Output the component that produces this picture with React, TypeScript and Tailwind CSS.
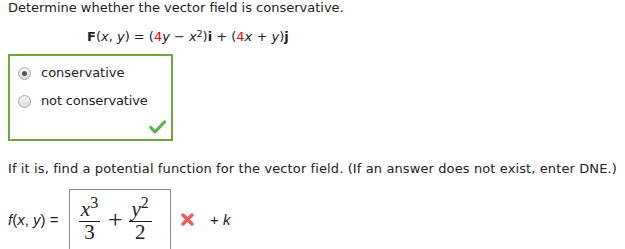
import React from "react";

function Radio({ checked }: { checked?: boolean }) {
  return (
    <span className="relative inline-flex h-[13px] w-[13px] items-center justify-center rounded-full border border-[#a8a8a8] bg-gradient-to-b from-[#f4f4f4] to-[#dcdcdc]">
      {checked && <span className="h-[5px] w-[5px] rounded-full bg-[#555]" />}
    </span>
  );
}

function Frac({ num, den, w }: { num: React.ReactNode; den: React.ReactNode; w: string }) {
  return (
    <span className={`inline-flex flex-col items-center ${w}`}>
      <span className="h-[24px] leading-[24px] whitespace-nowrap">{num}</span>
      <span className="h-px w-full bg-[#222]" />
      <span className="h-[20px] leading-[20px]">{den}</span>
    </span>
  );
}

export default function App() {
  return (
    <div className="h-[249px] w-[625px] bg-white pl-[8px] text-[13px] text-[#222] font-['DejaVu_Sans',Verdana,sans-serif]">
      <div className="leading-[16px]">Determine whether the vector field is conservative.</div>
      <div className="mt-[13px] pl-[79px] leading-[16px]">
        <b>F</b>(<i>x</i>, <i>y</i>) = (<span className="text-[#ff0000]">4</span><i>y</i> − <i>x</i>
        <sup className="text-[9px]">2</sup>)<b>i</b> + (<span className="text-[#ff0000]">4</span><i>x</i> + <i>y</i>)<b>j</b>
      </div>
      <div className="mt-[9px] flex h-[87px] w-[165px] flex-col border-2 border-[#6aaa3a] pl-[8px] pt-[9px]">
        <div className="flex items-center gap-[10px] leading-[16px]">
          <Radio checked />
          <span>conservative</span>
        </div>
        <div className="mt-[12px] flex items-center gap-[10px] leading-[16px]">
          <Radio />
          <span className="tracking-[-0.15px]">not conservative</span>
        </div>
        <div className="mt-auto flex justify-end pb-[5px] pr-[5px]">
          <svg width="17" height="14" viewBox="0 0 17 14">
            <path d="M1.8 7.5 L6 11.8 L15.5 2" fill="none" stroke="#5fb04e" strokeWidth="3.2" strokeLinecap="round" strokeLinejoin="round" />
          </svg>
        </div>
      </div>
      <div className="mt-[20px] leading-[16px] tracking-[0.11px]">
        If it is, find a potential function for the vector field. (If an answer does not exist, enter DNE.)
      </div>
      <div className="mt-[12px] flex items-center">
        <span className="w-[61px] text-[15px] leading-[18px] font-['Liberation_Sans',Arial,sans-serif]">
          <i>f</i>(<i>x</i>, <i>y</i>) =
        </span>
        <div className="flex h-[61px] w-[102px] items-start border border-[#8a8a8a] pl-[9px] pt-[7px] text-[21px] text-[#222] font-['Liberation_Serif','Times_New_Roman',serif]">
          <Frac w="w-[21px]" num={<><i>x</i><span className="relative top-[-8px] text-[16px]">3</span></>} den="3" />
          <span className="ml-[8px] mr-[6px] mt-[10px] text-[26px] leading-[26px]">+</span>
          <Frac w="w-[23px]" num={<><i>y</i><span className="relative top-[-8px] text-[16px]">2</span></>} den="2" />
        </div>
        <svg className="ml-[10px]" width="13" height="13" viewBox="0 0 13 13">
          <path d="M2 2 L11 11 M11 2 L2 11" stroke="#f05a5a" strokeWidth="3.4" strokeLinecap="round" />
        </svg>
        <span className="ml-[16px] text-[15px] leading-[18px] font-['Liberation_Sans',Arial,sans-serif]">
          + <i>k</i>
        </span>
      </div>
    </div>
  );
}
